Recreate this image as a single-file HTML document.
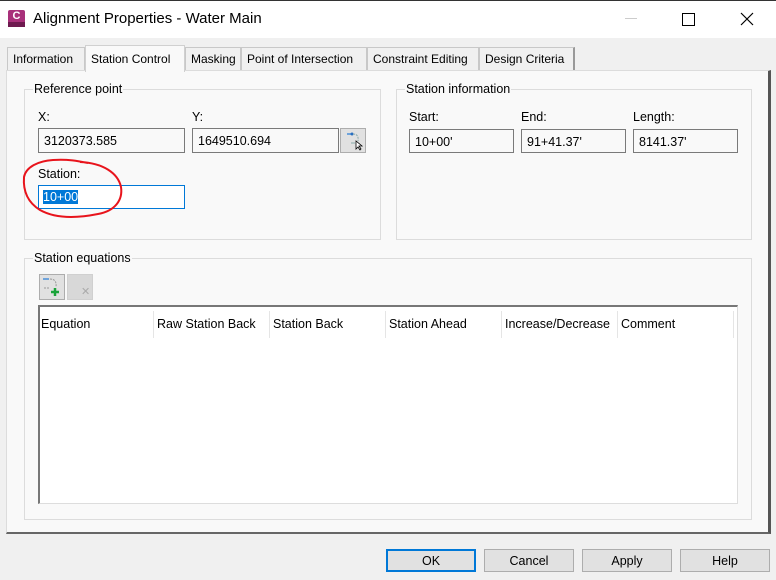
<!DOCTYPE html><html><head><style>
*{box-sizing:border-box;margin:0;padding:0}
body{width:776px;height:580px;background:#f0f0f0;font-family:"Liberation Sans",sans-serif;font-size:12px;color:#000;position:relative;overflow:hidden}
.a{position:absolute}
.tb{left:0;top:0;width:776px;height:38px;background:#fff;border-top:1px solid #333}
.tab{position:absolute;top:47px;height:23px;border:1px solid #c8c8c8;border-bottom:none;background:#f0f0f0;padding:4px 0 0 5px;white-space:nowrap}
.grp{position:absolute;border:1px solid #dcdcdc}
.lg{position:absolute;top:-8px;left:8px;background:#f9f9f9;padding:0 1px;font-size:12.5px}
.box{position:absolute;height:25px;border:1px solid #7a7a7a;background:#f9f9f9;padding:5px 0 0 5px;font-size:12.5px}
.lbl{position:absolute;font-size:12.5px}
.btn{position:absolute;top:549px;width:90px;height:23px;border:1px solid #adadad;background:#e1e1e1;text-align:center;padding-top:4px;font-size:12.5px}
.col{position:absolute;top:311px;height:27px;border-right:1px solid #e5e5e5;padding:6px 0 0 3px;font-size:12.5px;white-space:nowrap}
</style></head><body>
<div class="a tb"></div>
<div class="a" style="left:8px;top:10px;width:17px;height:17px;background:#a8307a;border-radius:2px;color:#fff;font-weight:bold;font-size:11px;text-align:center;line-height:13px">C<div style="position:absolute;left:0;bottom:0;width:17px;height:5px;background:#6e1a4f"></div></div>
<div class="a" style="left:33px;top:10px;font-size:15px">Alignment Properties - Water Main</div>
<div class="a" style="left:625px;top:18px;width:12px;height:1px;background:#ccc"></div>
<div class="a" style="left:682px;top:13px;width:13px;height:13px;border:1px solid #000"></div>
<svg class="a" style="left:740px;top:12px" width="14" height="14"><path d="M1 1L13 13M13 1L1 13" stroke="#000" stroke-width="1.2"/></svg>

<div class="a" style="left:6px;top:70px;width:765px;height:464px;background:#f9f9f9;border:1px solid #dcdcdc;border-right:3px solid #555;border-bottom:2px solid #666"></div>
<div class="tab" style="left:7px;width:78px">Information</div>
<div class="tab" style="left:85px;top:45px;height:27px;width:100px;background:#f9f9f9;border-color:#d0d0d0;padding-top:6px">Station Control</div>
<div class="tab" style="left:185px;width:56px">Masking</div>
<div class="tab" style="left:241px;width:126px">Point of Intersection</div>
<div class="tab" style="left:367px;width:112px">Constraint Editing</div>
<div class="tab" style="left:479px;width:96px;border-right:2px solid #999">Design Criteria</div>

<div class="grp" style="left:24px;top:89px;width:357px;height:151px"><span class="lg">Reference point</span></div>
<div class="lbl" style="left:38px;top:110px">X:</div>
<div class="lbl" style="left:192px;top:110px">Y:</div>
<div class="box" style="left:38px;top:128px;width:147px">3120373.585</div>
<div class="box" style="left:192px;top:128px;width:147px">1649510.694</div>
<div class="a" style="left:340px;top:128px;width:26px;height:25px;border:1px solid #adadad;background:#e1e1e1"><svg width="24" height="23"><path d="M6 5h4" stroke="#4a90d9" stroke-width="1.5"/><circle cx="11" cy="5" r="1.5" fill="#2a6fc0"/><path d="M12 5q6 0 5 7" stroke="#8aa" fill="none" stroke-dasharray="2 1"/><path d="M10 14h4" stroke="#8aa"/><path d="M15 12v8l2-2 2 3 1-1-2-3h3z" fill="#fff" stroke="#000" stroke-width=".8"/></svg></div>
<div class="lbl" style="left:38px;top:167px">Station:</div>
<div class="box" style="left:38px;top:185px;width:147px;height:24px;border-color:#0078d7;background:#fff;padding:4px 0 0 4px"><span style="background:#0078d7;color:#fff">10+00</span></div>
<svg class="a" style="left:18px;top:155px" width="110" height="70"><path d="M62 7C85 8 100 18 103 32 105 45 97 56 80 59 60 63 38 64 22 55 9 47 5 35 6 22 8 12 20 6 35 5 50 4 60 6 70 8" fill="none" stroke="#e8141c" stroke-width="2"/></svg>

<div class="grp" style="left:396px;top:89px;width:356px;height:151px"><span class="lg">Station information</span></div>
<div class="lbl" style="left:409px;top:110px">Start:</div>
<div class="lbl" style="left:521px;top:110px">End:</div>
<div class="lbl" style="left:633px;top:110px">Length:</div>
<div class="box" style="left:409px;top:129px;width:105px;height:24px">10+00'</div>
<div class="box" style="left:521px;top:129px;width:105px;height:24px">91+41.37'</div>
<div class="box" style="left:633px;top:129px;width:105px;height:24px">8141.37'</div>

<div class="grp" style="left:24px;top:258px;width:728px;height:262px"><span class="lg">Station equations</span></div>
<div class="a" style="left:39px;top:274px;width:26px;height:26px;border:1px solid #adadad;background:#e1e1e1"><svg width="24" height="24"><path d="M3 4h6" stroke="#4a90d9" stroke-width="1.5"/><path d="M10 4q7 0 6 8M4 13h6" stroke="#999" fill="none" stroke-dasharray="2 1"/><path d="M15 13v8M11 17h8" stroke="#1aa33a" stroke-width="2.5"/></svg></div>
<div class="a" style="left:67px;top:274px;width:26px;height:26px;background:#d8d8d8;border:1px solid #d0d0d0;color:#aaa;font-size:11px;padding:10px 0 0 13px">✕</div>
<div class="a" style="left:38px;top:305px;width:700px;height:199px;background:#fff;border:1px solid #ddd;border-top:2px solid #777;border-left:2px solid #777"></div>
<div class="col" style="left:38px;width:116px">Equation</div>
<div class="col" style="left:154px;width:116px">Raw Station Back</div>
<div class="col" style="left:270px;width:116px">Station Back</div>
<div class="col" style="left:386px;width:116px">Station Ahead</div>
<div class="col" style="left:502px;width:116px">Increase/Decrease</div>
<div class="col" style="left:618px;width:116px">Comment</div>

<div class="btn" style="left:386px;border:2px solid #0078d7;padding-top:3px">OK</div>
<div class="btn" style="left:484px">Cancel</div>
<div class="btn" style="left:582px">Apply</div>
<div class="btn" style="left:680px">Help</div>
</body></html>
